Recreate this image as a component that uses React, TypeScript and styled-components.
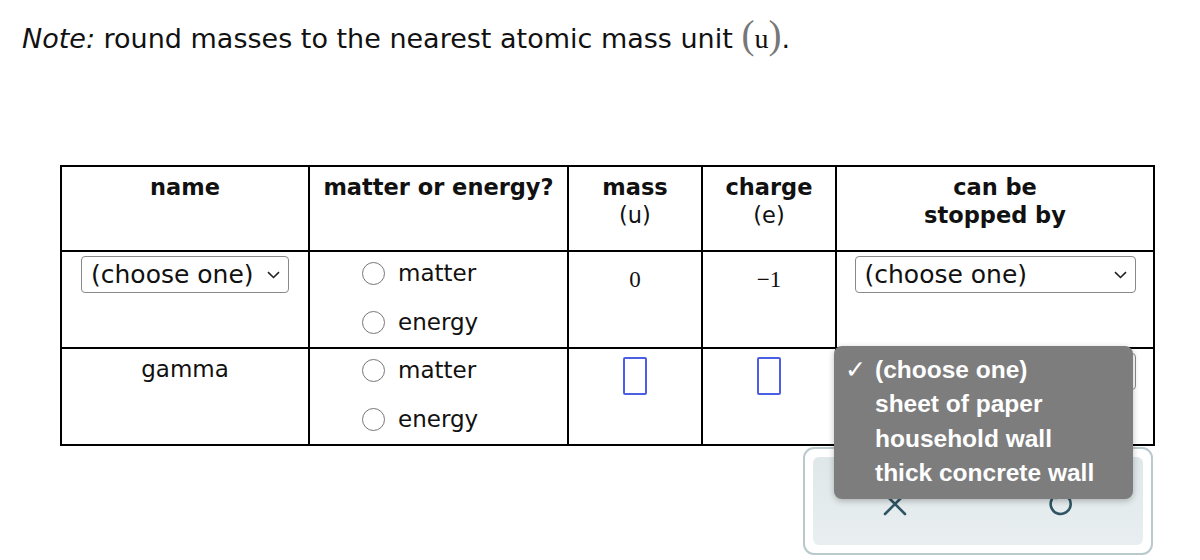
import React from "react";
import styled, { createGlobalStyle } from "styled-components";

const Global = createGlobalStyle`
  html, body { margin: 0; padding: 0; background: #fff; }
  body { font-family: "DejaVu Sans", Verdana, sans-serif; color: #111; }
`;

const Page = styled.div`
  width: 1200px;
  height: 560px;
  overflow: hidden;
  position: relative;
  padding: 16px 0 0 22px;
  box-sizing: border-box;
`;

const Note = styled.p`
  margin: 0;
  font-size: 27px;
  line-height: 38px;
  color: #111;
  em { font-style: italic; }
`;

const MathU = styled.span`
  font-family: "Liberation Serif", "Times New Roman", serif;
  font-size: 28px;
  .paren { font-size: 39px; color: #777; font-weight: 300; }
`;

const Body = styled.div`
  margin: 107px 0 0 38px;
  width: 1093px;
  display: flex;
  flex-direction: column;
`;

const Table = styled.table`
  border-collapse: collapse;
  width: 1093px;
  table-layout: fixed;
  td, th { border: 2px solid #000; padding: 0; vertical-align: top; text-align: center; }
`;

const Th = styled.th`
  height: 85px;
  font-size: 22.5px;
  font-weight: 700;
  line-height: 28px;
  padding-top: 6px !important;
  box-sizing: border-box;
  .sub { font-weight: 400; }
`;

const Td = styled.td`
  height: 97px;
  position: relative;
  box-sizing: border-box;
`;

const SelectBox = styled.div<{ $w: number }>`
  width: ${(p) => p.$w}px;
  height: 37px;
  box-sizing: border-box;
  border: 1px solid #8a8a8a;
  border-radius: 4px;
  margin: 4px auto 0;
  display: flex;
  align-items: center;
  justify-content: space-between;
  padding: 0 8px 0 9px;
  font-size: 25px;
  color: #111;
  background: #fff;
`;

const Chevron = () => (
  <svg width="13" height="8" viewBox="0 0 13 8">
    <path d="M1 1.2 L6.5 6.5 L12 1.2" fill="none" stroke="#222" strokeWidth="1.6" />
  </svg>
);

const RadioList = styled.div`
  display: flex;
  flex-direction: column;
  gap: 23px;
  padding: 8px 0 0 52px;
`;

const RadioRow = styled.div`
  display: flex;
  align-items: center;
  gap: 13px;
  font-size: 23px;
  height: 26px;
`;

const Circle = styled.span`
  width: 21px;
  height: 21px;
  border: 1.5px solid #777;
  border-radius: 50%;
  display: inline-block;
  flex: none;
`;

const Num = styled.div`
  font-family: "Liberation Serif", "Times New Roman", serif;
  font-size: 23px;
  padding-top: 15px;
`;

const TextCell = styled.div`
  font-size: 23px;
  padding-top: 7px;
`;

const InputBox = styled.div`
  width: 24px;
  height: 38px;
  box-sizing: border-box;
  border: 2px solid #4a5fe6;
  border-radius: 2px;
  margin: 8px auto 0;
`;

const Menu = styled.div`
  position: absolute;
  top: -3px;
  left: -3px;
  width: 299px;
  height: 153px;
  box-sizing: border-box;
  background: #7d7d7d;
  border-radius: 8px;
  box-shadow: 0 2px 6px rgba(0,0,0,0.25);
  padding: 7px 0 0 0;
  z-index: 5;
  text-align: left;
`;

const MenuItem = styled.div`
  font-family: "Liberation Sans", Arial, sans-serif;
  font-size: 24.5px;
  font-weight: 700;
  color: #fff;
  height: 34.3px;
  line-height: 34px;
  padding-left: 41px;
  position: relative;
  -webkit-font-smoothing: antialiased;
`;

const Check = styled.span`
  position: absolute;
  left: 11px;
  top: 0;
  font-weight: 400;
`;

const Footer = styled.div`
  display: flex;
  justify-content: flex-end;
  margin-top: 1px;
`;

const ActionCard = styled.div`
  width: 350px;
  height: 108px;
  box-sizing: border-box;
  border: 2px solid #b9c9cc;
  border-radius: 11px;
  padding: 8px;
  background: #fff;
`;

const ActionInner = styled.div`
  height: 100%;
  border-radius: 6px;
  background: linear-gradient(#dfe7e9, #e9eff0);
  display: flex;
  justify-content: space-around;
  align-items: center;
  padding-top: 6px;
  box-sizing: border-box;
`;

export default function App() {
  return (
    <>
      <Global />
      <Page>
        <Note>
          <em>Note:</em> round masses to the nearest atomic mass unit{" "}
          <MathU>
            <span className="paren">(</span>u<span className="paren">)</span>
          </MathU>
          .
        </Note>
        <Body>
          <Table>
            <colgroup>
              <col style={{ width: 248 }} />
              <col style={{ width: 259 }} />
              <col style={{ width: 134 }} />
              <col style={{ width: 134 }} />
              <col style={{ width: 318 }} />
            </colgroup>
            <thead>
              <tr>
                <Th>name</Th>
                <Th>matter or energy?</Th>
                <Th>
                  mass
                  <br />
                  <span className="sub">(u)</span>
                </Th>
                <Th>
                  charge
                  <br />
                  <span className="sub">(e)</span>
                </Th>
                <Th>
                  can be
                  <br />
                  stopped by
                </Th>
              </tr>
            </thead>
            <tbody>
              <tr>
                <Td>
                  <SelectBox $w={208}>
                    <span>(choose one)</span>
                    <Chevron />
                  </SelectBox>
                </Td>
                <Td>
                  <RadioList>
                    <RadioRow><Circle />matter</RadioRow>
                    <RadioRow><Circle />energy</RadioRow>
                  </RadioList>
                </Td>
                <Td><Num>0</Num></Td>
                <Td><Num>−1</Num></Td>
                <Td>
                  <SelectBox $w={281}>
                    <span>(choose one)</span>
                    <Chevron />
                  </SelectBox>
                </Td>
              </tr>
              <tr>
                <Td><TextCell>gamma</TextCell></Td>
                <Td>
                  <RadioList>
                    <RadioRow><Circle />matter</RadioRow>
                    <RadioRow><Circle />energy</RadioRow>
                  </RadioList>
                </Td>
                <Td><InputBox /></Td>
                <Td><InputBox /></Td>
                <Td>
                  <SelectBox $w={281}>
                    <span>(choose one)</span>
                    <Chevron />
                  </SelectBox>
                  <Menu>
                    <MenuItem><Check>✓</Check>(choose one)</MenuItem>
                    <MenuItem>sheet of paper</MenuItem>
                    <MenuItem>household wall</MenuItem>
                    <MenuItem>thick concrete wall</MenuItem>
                  </Menu>
                </Td>
              </tr>
            </tbody>
          </Table>
          <Footer>
            <ActionCard>
              <ActionInner>
                <svg width="26" height="26" viewBox="0 0 26 26">
                  <path d="M3 3 L23 23 M23 3 L3 23" stroke="#2f5564" strokeWidth="2.6" strokeLinecap="round" />
                </svg>
                <svg width="28" height="28" viewBox="0 0 28 28">
                  <path d="M6 9 A10 10 0 1 0 14 4" fill="none" stroke="#2f5564" strokeWidth="2.6" strokeLinecap="round" />
                  <path d="M10 1 L14 4 L10 8" fill="none" stroke="#2f5564" strokeWidth="2.6" strokeLinecap="round" strokeLinejoin="round" />
                </svg>
              </ActionInner>
            </ActionCard>
          </Footer>
        </Body>
      </Page>
    </>
  );
}
